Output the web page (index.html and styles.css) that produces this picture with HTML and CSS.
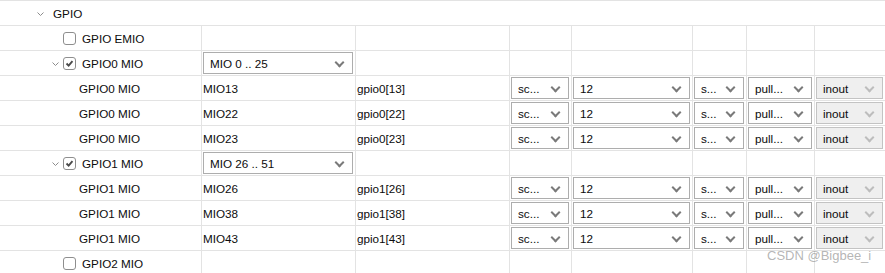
FILE: index.html
```html
<!DOCTYPE html>
<html lang="en">
<head>
    <meta charset="UTF-8">
    <title>MIO Configuration</title>
    <link rel="stylesheet" href="styles.css">
</head>
<body>
    <div class="grid">
        <div class="row full">
            <div class="cell tree lvl0">
                <svg class="toggle" viewBox="0 0 7 4"><path d="M0.5 0.5 L3.5 3.5 L6.5 0.5"/></svg>
                <span>GPIO</span>
            </div>
        </div>

        <div class="row">
            <div class="cell tree lvl1">
                <span class="check"></span>
                <span>GPIO EMIO</span>
            </div>
            <div class="cell"></div><div class="cell"></div><div class="cell"></div><div class="cell"></div><div class="cell"></div><div class="cell"></div><div class="cell last"></div>
        </div>

        <div class="row">
            <div class="cell tree lvl1b">
                <svg class="toggle" viewBox="0 0 7 4"><path d="M0.5 0.5 L3.5 3.5 L6.5 0.5"/></svg>
                <span class="check on"><svg viewBox="0 0 13 13"><path d="M3 6.5 L5.5 9 L10 3.8"/></svg></span>
                <span>GPIO0 MIO</span>
            </div>
            <div class="cell box"><div class="combo">MIO 0 .. 25</div></div>
            <div class="cell"></div><div class="cell"></div><div class="cell"></div><div class="cell"></div><div class="cell"></div><div class="cell last"></div>
        </div>

        <div class="row">
            <div class="cell tree leaf">GPIO0 MIO</div>
            <div class="cell text">MIO13</div>
            <div class="cell text">gpio0[13]</div>
            <div class="cell box"><div class="combo">sc...</div></div>
            <div class="cell box"><div class="combo">12</div></div>
            <div class="cell box"><div class="combo">s...</div></div>
            <div class="cell box"><div class="combo">pull...</div></div>
            <div class="cell box last"><div class="combo off">inout</div></div>
        </div>
        <div class="row">
            <div class="cell tree leaf">GPIO0 MIO</div>
            <div class="cell text">MIO22</div>
            <div class="cell text">gpio0[22]</div>
            <div class="cell box"><div class="combo">sc...</div></div>
            <div class="cell box"><div class="combo">12</div></div>
            <div class="cell box"><div class="combo">s...</div></div>
            <div class="cell box"><div class="combo">pull...</div></div>
            <div class="cell box last"><div class="combo off">inout</div></div>
        </div>
        <div class="row">
            <div class="cell tree leaf">GPIO0 MIO</div>
            <div class="cell text">MIO23</div>
            <div class="cell text">gpio0[23]</div>
            <div class="cell box"><div class="combo">sc...</div></div>
            <div class="cell box"><div class="combo">12</div></div>
            <div class="cell box"><div class="combo">s...</div></div>
            <div class="cell box"><div class="combo">pull...</div></div>
            <div class="cell box last"><div class="combo off">inout</div></div>
        </div>

        <div class="row">
            <div class="cell tree lvl1b">
                <svg class="toggle" viewBox="0 0 7 4"><path d="M0.5 0.5 L3.5 3.5 L6.5 0.5"/></svg>
                <span class="check on"><svg viewBox="0 0 13 13"><path d="M3 6.5 L5.5 9 L10 3.8"/></svg></span>
                <span>GPIO1 MIO</span>
            </div>
            <div class="cell box"><div class="combo">MIO 26 .. 51</div></div>
            <div class="cell"></div><div class="cell"></div><div class="cell"></div><div class="cell"></div><div class="cell"></div><div class="cell last"></div>
        </div>

        <div class="row">
            <div class="cell tree leaf">GPIO1 MIO</div>
            <div class="cell text">MIO26</div>
            <div class="cell text">gpio1[26]</div>
            <div class="cell box"><div class="combo">sc...</div></div>
            <div class="cell box"><div class="combo">12</div></div>
            <div class="cell box"><div class="combo">s...</div></div>
            <div class="cell box"><div class="combo">pull...</div></div>
            <div class="cell box last"><div class="combo off">inout</div></div>
        </div>
        <div class="row">
            <div class="cell tree leaf">GPIO1 MIO</div>
            <div class="cell text">MIO38</div>
            <div class="cell text">gpio1[38]</div>
            <div class="cell box"><div class="combo">sc...</div></div>
            <div class="cell box"><div class="combo">12</div></div>
            <div class="cell box"><div class="combo">s...</div></div>
            <div class="cell box"><div class="combo">pull...</div></div>
            <div class="cell box last"><div class="combo off">inout</div></div>
        </div>
        <div class="row">
            <div class="cell tree leaf">GPIO1 MIO</div>
            <div class="cell text">MIO43</div>
            <div class="cell text">gpio1[43]</div>
            <div class="cell box"><div class="combo">sc...</div></div>
            <div class="cell box"><div class="combo">12</div></div>
            <div class="cell box"><div class="combo">s...</div></div>
            <div class="cell box"><div class="combo">pull...</div></div>
            <div class="cell box last"><div class="combo off">inout</div></div>
        </div>

        <div class="row">
            <div class="cell tree lvl1">
                <span class="check"></span>
                <span>GPIO2 MIO</span>
            </div>
            <div class="cell"></div><div class="cell"></div><div class="cell"></div><div class="cell"></div><div class="cell"></div><div class="cell"></div><div class="cell last"></div>
        </div>
    </div>

    <div class="watermark">CSDN @Bigbee_i</div>
</body>
</html>
```

FILE: styles.css
```css
body {
    margin: 0;
    background: white;
    font-family: "Liberation Sans", Arial, sans-serif;
    font-size: 11.7px;
    color: #0c0c0c;
    overflow: hidden;
}

.grid {
    border-top: 1px solid #e3e3e3;
}

.row {
    display: grid;
    grid-template-columns: 202px 154px 154px 62px 121px 54px 68px 70px;
    height: 25px;
    box-sizing: border-box;
    border-bottom: 1px solid #e3e3e3;
}

.row.full {
    grid-template-columns: 1fr;
}

.cell {
    box-sizing: border-box;
    border-right: 1px solid #e3e3e3;
    display: flex;
    align-items: center;
    white-space: nowrap;
    min-width: 0;
}

.cell.last,
.row.full .cell {
    border-right: none;
}

.cell.text {
    padding-left: 1px;
    padding-top: 1px;
}

.cell.box {
    padding: 0 2px 0 1px;
}

/* tree column */
.tree {
    padding-top: 1px;
}

.tree.lvl0 {
    padding-left: 37px;
}

.tree.lvl1 {
    padding-left: 63px;
}

.tree.lvl1b {
    padding-left: 52px;
}

.tree.leaf {
    padding-left: 79px;
}

.toggle {
    width: 7px;
    height: 4px;
    fill: none;
    stroke: #8c8c8c;
    stroke-width: 1;
    margin-top: 1px;
}

.lvl0 .toggle {
    margin-right: 9px;
}

.lvl1b .toggle {
    margin-right: 4px;
}

.check {
    width: 13px;
    height: 13px;
    box-sizing: border-box;
    border: 1px solid #8e8e8e;
    border-radius: 3px;
    background: white;
    margin-right: 6px;
    display: flex;
    margin-top: -1px;
}

.check svg {
    width: 11px;
    height: 11px;
    fill: none;
    stroke: #4a4a4a;
    stroke-width: 2.2;
}

/* combo boxes */
.combo {
    position: relative;
    width: 100%;
    height: 22px;
    box-sizing: border-box;
    border: 1px solid #adadad;
    background: white;
    padding-left: 6px;
    display: flex;
    align-items: center;
    overflow: hidden;
}

.combo::after {
    content: "";
    position: absolute;
    right: 9px;
    top: 6px;
    width: 5px;
    height: 5px;
    border-right: 2px solid #7a7a7a;
    border-bottom: 2px solid #7a7a7a;
    transform: rotate(45deg);
}

.combo.off {
    background: #efefef;
    border-color: #c3c3c3;
}

.combo.off::after {
    border-color: #bdbdbd;
}

.watermark {
    position: absolute;
    left: 767px;
    top: 248px;
    font-size: 13px;
    color: rgba(140, 140, 140, 0.65);
}
```
